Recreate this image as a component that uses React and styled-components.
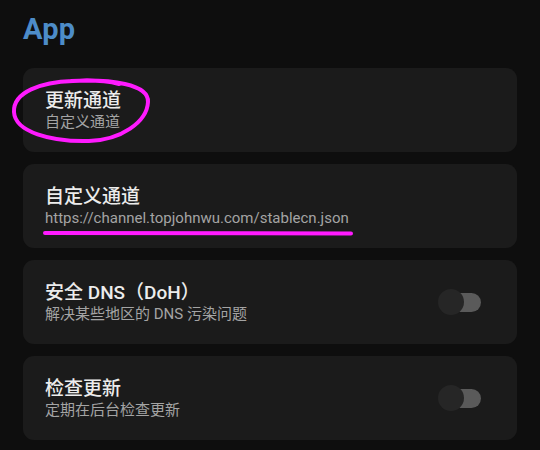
import React from 'react'
import styled, { createGlobalStyle } from 'styled-components'

const Global = createGlobalStyle`
  html, body {
    margin: 0;
    padding: 0;
    background: #0e0e0e;
  }
  body {
    font-family: Roboto, "Noto Sans CJK SC", sans-serif;
  }
`

const Page = styled.div`
  width: 540px;
  height: 450px;
  overflow: hidden;
  padding: 0 23px;
  box-sizing: border-box;
  position: relative;
`

const Heading = styled.h1`
  margin: 0;
  padding-top: 12px;
  height: 68px;
  box-sizing: border-box;
  font-size: 29px;
  font-weight: 700;
  color: #4d8cc8;
  letter-spacing: 0.2px;
`

const List = styled.div`
  display: flex;
  flex-direction: column;
  gap: 12px;
`

const Card = styled.div`
  position: relative;
  height: 84px;
  border-radius: 11px;
  background: #1b1b1b;
  display: flex;
  align-items: center;
  justify-content: space-between;
  padding: 0 36px 0 22px;
  box-sizing: border-box;
`

const Texts = styled.div`
  display: flex;
  flex-direction: column;
  gap: 1px;
`

const Title = styled.div`
  font-size: 19px;
  font-weight: 500;
  color: #ececec;
  line-height: 23px;
`

const Sub = styled.div`
  font-size: 15px;
  color: #a4a4a4;
  line-height: 19px;
`

const Switch = styled.div`
  position: relative;
  width: 42px;
  height: 26px;
  display: flex;
  align-items: center;
`

const Track = styled.div`
  position: absolute;
  right: 0;
  width: 34px;
  height: 19px;
  border-radius: 10px;
  background: #5a5a5a;
`

const Thumb = styled.div`
  position: absolute;
  left: -1px;
  width: 26px;
  height: 26px;
  border-radius: 50%;
  background: #262626;
`

const Mark = styled.svg`
  position: absolute;
  pointer-events: none;
  overflow: visible;
`

const Toggle = () => (
  <Switch>
    <Track />
    <Thumb />
  </Switch>
)

export default function App() {
  return (
    <Page>
      <Global />
      <Heading>App</Heading>
      <List>
        <Card>
          <Texts>
            <Title>更新通道</Title>
            <Sub>自定义通道</Sub>
          </Texts>
          <Mark style={{ left: -12, top: 10 }} width="140" height="66" viewBox="0 0 140 66">
            <path
              d="M60 3 C100 1 138 6 137 24 C136 44 110 62 78 63 C40 64 4 54 3 34 C2 14 30 4 62 3 C80 2 96 3 108 6"
              fill="none"
              stroke="#ff1aff"
              strokeWidth="4"
              strokeLinecap="round"
            />
          </Mark>
        </Card>
        <Card>
          <Texts>
            <Title>自定义通道</Title>
            <Sub>https://channel.topjohnwu.com/stablecn.json</Sub>
          </Texts>
          <Mark style={{ left: 20, top: 66 }} width="310" height="6" viewBox="0 0 310 6">
            <path d="M2 3 L308 3.5" stroke="#ff1aff" strokeWidth="4" strokeLinecap="round" />
          </Mark>
        </Card>
        <Card>
          <Texts>
            <Title>安全 DNS（DoH）</Title>
            <Sub>解决某些地区的 DNS 污染问题</Sub>
          </Texts>
          <Toggle />
        </Card>
        <Card>
          <Texts>
            <Title>检查更新</Title>
            <Sub>定期在后台检查更新</Sub>
          </Texts>
          <Toggle />
        </Card>
      </List>
    </Page>
  )
}
